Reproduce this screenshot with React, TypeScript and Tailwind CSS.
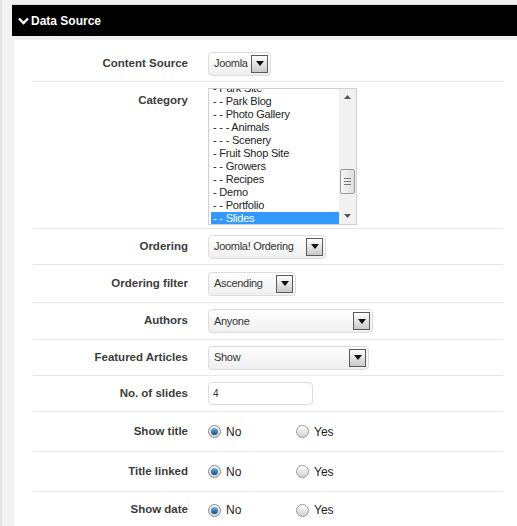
import React from "react";

const font = "font-['Liberation_Sans',Arial,sans-serif]";

function Arrow() {
  return (
    <span className="flex h-[18px] w-[17px] shrink-0 items-center justify-center border border-[#5a5a5a] bg-gradient-to-b from-white to-[#c9c9c9]">
      <svg width="8" height="5" viewBox="0 0 8 5">
        <path d="M0 0h8L4 5z" fill="#111" />
      </svg>
    </span>
  );
}

function Select({ value, w }: { value: string; w: string }) {
  return (
    <div
      className={`flex h-[24px] items-center justify-between rounded-[4px] border border-[#dcdcdc] bg-gradient-to-b from-white to-[#efefef] pl-[5px] pr-[2px] ${w}`}
    >
      <span className="text-[11px] tracking-[-0.3px] text-[#333]">{value}</span>
      <Arrow />
    </div>
  );
}

function Radio({ on }: { on: boolean }) {
  return on ? (
    <span className="flex h-[13px] w-[13px] items-center justify-center rounded-full border border-[#8a8a8a] bg-gradient-to-b from-[#f4f4f4] to-[#d6d6d6]">
      <span className="h-[7px] w-[7px] rounded-full bg-gradient-to-b from-[#6fb3e0] to-[#0b4f86]" />
    </span>
  ) : (
    <span className="h-[13px] w-[13px] rounded-full border border-[#9a9a9a] bg-gradient-to-b from-white to-[#d0d0d0]" />
  );
}

function Row({
  label,
  children,
  h,
  top,
}: {
  label: string;
  children: React.ReactNode;
  h: string;
  top?: boolean;
}) {
  return (
    <div className={`flex border-b border-[#e6e6e6] ${top ? "items-start pt-[6px]" : "items-center"} ${h}`}>
      <div
        className={`w-[155px] shrink-0 text-right text-[11.5px] font-bold text-[#3c3c3c] ${top ? "pt-[4px]" : ""}`}
      >
        {label}
      </div>
      <div className="ml-[20px] flex items-center">{children}</div>
    </div>
  );
}

function YesNo() {
  return (
    <div className="flex items-center text-[12px] text-[#222]">
      <Radio on />
      <span className="ml-[5px] w-[70px]">No</span>
      <Radio on={false} />
      <span className="ml-[5px]">Yes</span>
    </div>
  );
}

const categories = [
  "- Park Site",
  "- - Park Blog",
  "- - Photo Gallery",
  "- - - Animals",
  "- - - Scenery",
  "- Fruit Shop Site",
  "- - Growers",
  "- - Recipes",
  "- Demo",
  "- - Portfolio",
  "- - Slides",
];

function CategoryList() {
  return (
    <div className="flex h-[137px] w-[149px] overflow-hidden border border-[#cfcfcf] bg-white">
      <div className="flex-1 overflow-hidden pl-[2px] pt-[1px]">
        <div className="-mt-[8px]">
          {categories.map((c) => (
            <div
              key={c}
              className={`h-[13px] pl-[2px] text-[11px] leading-[13px] tracking-[-0.2px] ${
                c === "- - Slides" ? "bg-[#3399ff] text-white" : "text-[#222]"
              }`}
            >
              {c}
            </div>
          ))}
        </div>
      </div>
      <div className="flex w-[17px] shrink-0 flex-col items-center bg-[#f1f1f1] py-[6px]">
        <svg width="7" height="4" viewBox="0 0 7 4">
          <path d="M0 4L3.5 0L7 4z" fill="#555" />
        </svg>
        <div className="flex-1" />
        <div className="flex h-[25px] w-[15px] flex-col items-center justify-center gap-[2px] rounded-[2px] border border-[#9a9a9a] bg-gradient-to-r from-[#f7f7f7] to-[#dedede]">
          <span className="h-px w-[7px] bg-[#777]" />
          <span className="h-px w-[7px] bg-[#777]" />
          <span className="h-px w-[7px] bg-[#777]" />
        </div>
        <div className="h-[20px]" />
        <svg width="7" height="4" viewBox="0 0 7 4">
          <path d="M0 0L7 0L3.5 4z" fill="#555" />
        </svg>
      </div>
    </div>
  );
}

export default function App() {
  return (
    <div className={`flex min-h-[526px] w-full bg-[#f2f2f2] ${font}`}>
      <div className="w-[12px] shrink-0 border-l-[2px] border-[#e4e4e4] bg-[#f2f2f2]" />
      <div className="flex flex-1 flex-col">
        <div className="h-[5px] border-b border-[#dcdcdc] bg-[#f0f0f0]" />
        <div className="flex h-[31px] items-center bg-black pl-[6px] text-white">
          <svg width="11" height="8" viewBox="0 0 11 8" className="mt-[1px]">
            <path d="M1 1.5L5.5 6L10 1.5" fill="none" stroke="#fff" strokeWidth="2.4" />
          </svg>
          <span className="ml-[2px] text-[12px] font-bold">Data Source</span>
        </div>
        <div className="h-[4px] bg-[#f1f1f1]" />
        <div className="ml-[2px] flex-1 bg-white pl-[19px] pr-[14px] pt-[6px]">
          <Row label="Content Source" h="h-[36px]">
            <Select value="Joomla" w="w-[63px]" />
          </Row>
          <Row label="Category" h="h-[147px]" top>
            <CategoryList />
          </Row>
          <Row label="Ordering" h="h-[36px]">
            <Select value="Joomla! Ordering" w="w-[118px]" />
          </Row>
          <Row label="Ordering filter" h="h-[38px]">
            <Select value="Ascending" w="w-[88px]" />
          </Row>
          <Row label="Authors" h="h-[37px]">
            <Select value="Anyone" w="w-[165px]" />
          </Row>
          <Row label="Featured Articles" h="h-[36px]">
            <Select value="Show" w="w-[161px]" />
          </Row>
          <Row label="No. of slides" h="h-[36px]">
            <div className="flex h-[23px] w-[105px] items-center rounded-[4px] border border-[#dcdcdc] bg-white pl-[4px] text-[10px] text-[#333]">
              4
            </div>
          </Row>
          <Row label="Show title" h="h-[40px]">
            <YesNo />
          </Row>
          <Row label="Title linked" h="h-[40px]">
            <YesNo />
          </Row>
          <div className="flex h-[36px] items-center">
            <div className="w-[155px] shrink-0 text-right text-[11.5px] font-bold text-[#3c3c3c]">Show date</div>
            <div className="ml-[20px]">
              <YesNo />
            </div>
          </div>
        </div>
      </div>
    </div>
  );
}
